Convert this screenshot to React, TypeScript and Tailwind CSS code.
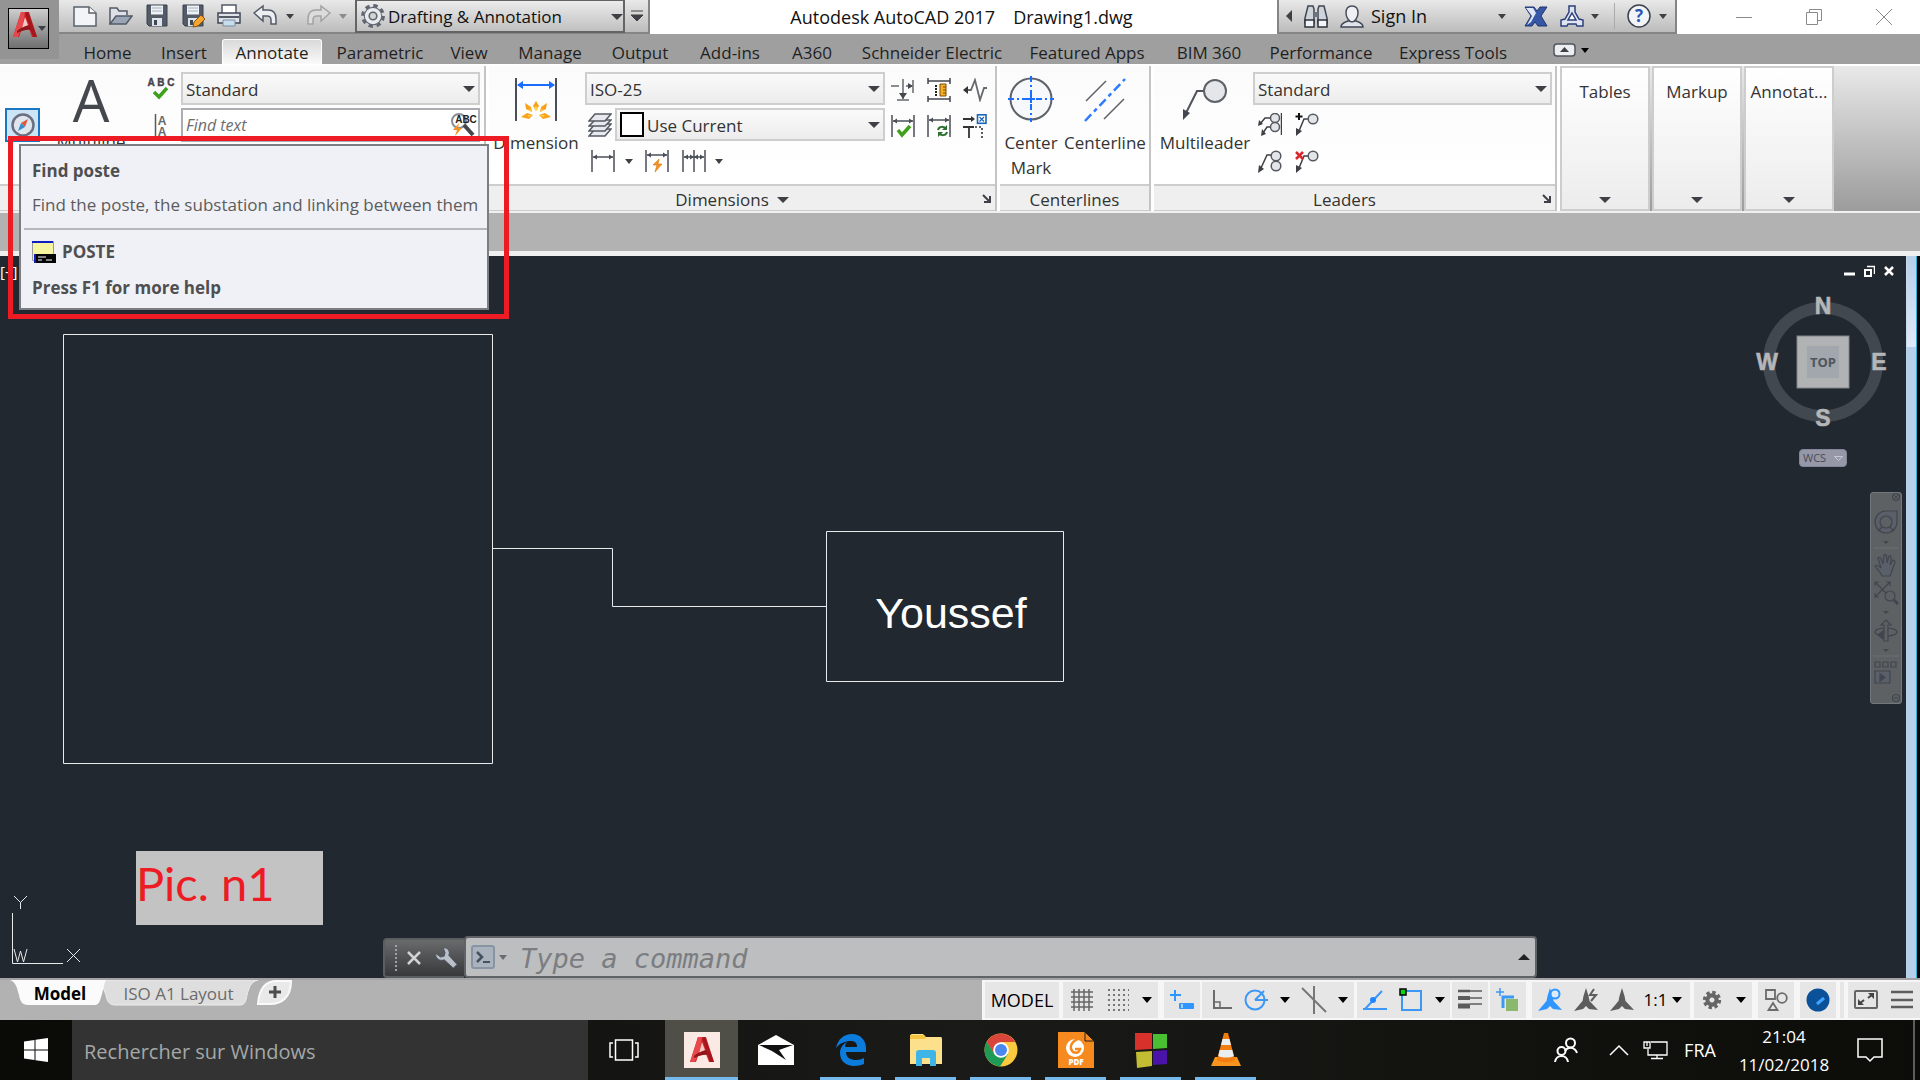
import React from "react";

type P = { children?: React.ReactNode; className?: string };

const Ic = ({ children, className = "", size = 24 }: P & { size?: number }) => (
  <svg width={size} height={size} viewBox="0 0 24 24" fill="none" className={`shrink-0 ${className}`} aria-hidden="true">
    {children}
  </svg>
);

const Caret = ({ className = "text-[#3f4045]", big = false }: { className?: string; big?: boolean }) => (
  <svg width={big ? 12 : 8} height={big ? 6 : 5} viewBox="0 0 12 6" preserveAspectRatio="none" className={`shrink-0 ${className}`} aria-hidden="true">
    <path d="M0 0h12L6 6z" fill="currentColor" />
  </svg>
);

const Btn = ({ children, className = "", label }: P & { label: string }) => (
  <button type="button" aria-label={label} className={`flex items-center justify-center shrink-0 ${className}`}>
    {children}
  </button>
);

/* ---------- title bar ---------- */

const AcadLogo = ({ className = "" }: { className?: string }) => (
  <svg viewBox="0 0 24 28" className={className} aria-hidden="true">
    <path d="M8 1h8l8 25h-5l-3-8-8 2-2 6H0z" fill="#c8242b" />
    <path d="M8 1h4l-2 12-5 13H0z" fill="#e8484b" />
    <path d="M12 6l3 8-6 3z" fill="#f3c9c4" />
    <path d="M4 20c6-5 10-5 14-6l2 5c-6-1-10 0-16 3z" fill="#93151b" />
    <path d="M15 1l9 25h-4L12 2z" fill="#a5161d" />
  </svg>
);

const FloppyShape = () => (
  <>
    <path d="M2 1h20v21H4l-2-2z" fill="#535b68" stroke="#3b424e" />
    <path d="M6 1.500h12v9H6z" fill="#eef1f5" />
    <path d="M7 4h10M7 7h10" stroke="#a8b0bb" />
    <path d="M7 14h10v8H7z" fill="#dfe4ea" />
    <path d="M9 16h3v5H9z" fill="#3f4754" />
  </>
);

const Help = () => (
  <Ic>
    <circle cx="12" cy="12" r="11" fill="#f2f4f8" stroke="#3b424e" strokeWidth="1.500" />
    <text x="12" y="18" textAnchor="middle" fontSize="17" fontWeight="700" fill="#2c55b5">?</text>
  </Ic>
);

const TitleBar = () => (
  <header className="flex h-[34px] items-start bg-white pl-[59px]">
    <div className="flex h-[34px] w-[591px] shrink-0 items-center border-r-2 border-b-2 border-[#858585] bg-gradient-to-b from-[#e9e9e9] to-[#bcbcbc] pl-[14px]">
      <div className="flex items-center gap-3">
        <Btn label="New"><Ic><path d="M1 3h15l7 6v13H1z" fill="#f3f4f7" stroke="#5a616c" strokeWidth="1.500" /><path d="M16 3v6h7" fill="#fff" stroke="#5a616c" strokeWidth="1.500" /></Ic></Btn>
        <Btn label="Open"><Ic><path d="M1 20V4h7l2 3h8v4" fill="#dde1e7" stroke="#535b68" strokeWidth="1.500" /><path d="M1 20l6-8h16l-6 8z" fill="#9aa6b5" stroke="#535b68" strokeWidth="1.500" /></Ic></Btn>
        <Btn label="Save"><Ic><FloppyShape /></Ic></Btn>
        <Btn label="Save As"><Ic><FloppyShape /><path d="M12 23l1-5 7-7 4 4-7 7z" fill="#f5a62c" stroke="#8a4f14" /></Ic></Btn>
        <Btn label="Plot"><Ic><path d="M5 1h14v9H5z" fill="#fff" stroke="#535b68" strokeWidth="1.500" /><path d="M1 9h22v10H1z" fill="#dfe2e7" stroke="#3f4754" strokeWidth="1.500" /><path d="M2 13h20" stroke="#535b68" strokeWidth="2" /><path d="M6 16h12v6H6z" fill="#c9ddec" stroke="#7690a5" /></Ic></Btn>
        <Btn label="Undo"><Ic><path d="M1 9l9-7v4h5c6 0 8 4 8 9v5h-5v-4c0-3-1-4-4-4h-4v5z" fill="#eceef1" stroke="#535b68" strokeWidth="1.500" /></Ic></Btn>
      </div>
      <Btn label="Undo list" className="w-[26px]"><Caret /></Btn>
      <Btn label="Redo" className="ml-1"><Ic><path d="M23 9l-9-7v4H9c-6 0-8 4-8 9v5h5v-4c0-3 1-4 4-4h4v5z" fill="#dcdcdc" stroke="#a3a3a3" strokeWidth="1.500" /></Ic></Btn>
      <Btn label="Redo list" className="w-6"><Caret className="text-[#8b8b8b]" /></Btn>
      <label className="relative flex h-[34px] w-[270px] items-center border-2 border-[#646464] bg-gradient-to-b from-[#ececec] to-[#c0c0c0] pl-[3px]">
        <Ic size={26}>
          <circle cx="12" cy="12" r="9.500" stroke="#5f6671" strokeWidth="3" strokeDasharray="4 3.460" />
          <circle cx="12" cy="12" r="8" fill="#e9ebee" stroke="#5f6671" />
          <circle cx="12" cy="12" r="3.500" fill="#d4d4d4" stroke="#5f6671" strokeWidth="1.500" />
        </Ic>
        <select aria-label="Workspace" className="h-full flex-1 appearance-none bg-transparent pt-px pl-[2px] text-[17px] text-[#111]">
          <option>Drafting &amp; Annotation</option>
        </select>
        <span className="pointer-events-none absolute right-0 top-[13px]"><Caret big /></span>
      </label>
      <Btn label="Customize Quick Access Toolbar" className="h-8 flex-1">
        <svg width="12" height="12" viewBox="0 0 12 12"><path d="M0 1h12M0 5h12L6 11z" fill="#3f4045" stroke="#3f4045" /></svg>
      </Btn>
    </div>
    <div className="flex h-[34px] flex-1 items-center justify-center gap-[18px] pr-1 whitespace-pre text-[18px] text-[#111]">
      <span>Autodesk AutoCAD 2017</span>
      <span>Drawing1.dwg</span>
    </div>
    <div className="flex h-[34px] w-[400px] shrink-0 items-center border-x-2 border-b-2 border-[#858585] bg-gradient-to-b from-[#e9e9e9] to-[#bcbcbc]">
      <Btn label="Collapse search" className="w-[20px]"><svg width="6" height="12"><path d="M6 0v12L0 6z" fill="#3f4045" /></svg></Btn>
      <Btn label="Search" className="mr-3 ml-[5px]"><Ic>
        <path d="M4 2h5l1 3v14H1v-5zM20 2h-5l-1 3v14h9v-5z" fill="#cfd3da" stroke="#3f4754" strokeWidth="1.500" />
        <path d="M1 16h9v7H1zM14 16h9v7h-9z" fill="#f4f5f8" stroke="#2c323c" strokeWidth="1.500" />
        <path d="M10 8h4v5h-4z" fill="#6c7480" /></Ic></Btn>
      <button type="button" className="flex items-center gap-[7px] pt-px text-[18px] text-[#111]">
        <Ic><path d="M1 22c0-4 4-5 7-6h8c3 1 7 2 7 6z" fill="#dfe2e8" stroke="#3f4754" strokeWidth="1.500" /><path d="M12 1c4 0 6 3 6 7s-3 9-6 9-6-5-6-9 2-7 6-7z" fill="#eef0f5" stroke="#4a515d" strokeWidth="1.500" /></Ic>
        Sign In
      </button>
      <Btn label="Sign in menu" className="ml-auto w-5"><Caret /></Btn>
      <Btn label="Exchange" className="ml-3"><Ic><path d="M1 3h9l3 4 3-4h7l-6 9 6 10h-9l-3-4-3 4H1l6-10z" fill="#3557a5" stroke="#24356c" /><path d="M2 4h7l3 5-5 9-4 3 5-9z" fill="#dfe6f5" /></Ic></Btn>
      <Btn label="A360" className="ml-3"><Ic><path d="M9 2h6v6l4 7 4 1v6h-6l-1-2H8l-1 2H1v-6l4-1 4-7z" fill="#dfe4f0" stroke="#2b3f7c" strokeWidth="1.500" /><path d="M12 9l4 7H8z" fill="#fff" stroke="#2b3f7c" strokeWidth="1.500" /></Ic></Btn>
      <Btn label="A360 menu" className="w-[22px]"><Caret /></Btn>
      <span className="mr-3 ml-2 h-[26px] w-px bg-[#aaa]" />
      <Btn label="Help"><Help /></Btn>
      <Btn label="Help menu" className="w-[24px]"><Caret /></Btn>
    </div>
    <div className="flex h-[34px] w-[243px] shrink-0 items-center justify-end gap-[54px] pr-7">
      <Btn label="Minimize"><svg width="16" height="16"><path d="M0 8.500h16" stroke="#8a8a8a" /></svg></Btn>
      <Btn label="Restore"><svg width="16" height="16" fill="none" stroke="#8a8a8a"><path d="M.5 3.500h11v12H.5zM3.500 3V.5h12v11H12" /></svg></Btn>
      <Btn label="Close"><svg width="16" height="16"><path d="M0 0l16 16M16 0L0 16" stroke="#8a8a8a" /></svg></Btn>
    </div>
  </header>
);

/* ---------- ribbon tabs ---------- */

const tabs: [string, string][] = [
  ["Home", "w-[77px]"], ["Insert", "w-[76px]"], ["Annotate", "w-[100px]"], ["Parametric", "w-[116px]"],
  ["View", "w-[62px]"], ["Manage", "w-[100px]"], ["Output", "w-[80px]"], ["Add-ins", "w-[100px]"],
  ["A360", "w-[64px]"], ["Schneider Electric", "w-[176px]"], ["Featured Apps", "w-[134px]"],
  ["BIM 360", "w-[110px]"], ["Performance", "w-[114px]"], ["Express Tools", "w-[150px]"],
];

const Tabs = () => (
  <nav className="flex h-[30px] items-end bg-[#9f9f9f] pl-[69px]" role="tablist">
    {tabs.map(([name, w]) => (
      <button
        key={name}
        type="button"
        role="tab"
        aria-selected={name === "Annotate"}
        className={`h-[25px] shrink-0 border border-b-0 text-[17px] leading-[26px] whitespace-nowrap text-[#1f1f1f] ${w} ${
          name === "Annotate" ? "rounded-t-[3px] border-white bg-gradient-to-b from-[#d9d9d9] to-[#fafafa]" : "border-transparent"
        }`}
      >
        {name}
      </button>
    ))}
    <div className="ml-[25px] flex h-[28px] items-center gap-[5px]">
      <Btn label="Minimize ribbon">
        <svg width="23" height="14"><rect x="1" y="1" width="21" height="12" rx="3" fill="#eceef2" stroke="#50555f" strokeWidth="1.500" /><path d="M7 9h9l-4.500-5z" fill="#3f4045" /></svg>
      </Btn>
      <Btn label="Ribbon options"><Caret className="text-black" /></Btn>
    </div>
  </nav>
);

/* ---------- ribbon ---------- */

const Panel = ({ children, className = "", title, launcher, caret }: P & { title?: string; launcher?: boolean; caret?: boolean }) => (
  <section className={`mr-[3px] flex shrink-0 flex-col border-r-2 border-[#c4c4c4] ${className}`}>
    <div className="flex h-[118px] bg-gradient-to-b from-[#fbfbfb] to-white">{children}</div>
    <div className={`relative flex h-[27px] items-center justify-center gap-2 border-t-2 border-b border-[#cdcdcd] bg-[#efefef] pt-[3px] text-[17px] ${launcher ? "pr-5" : ""}`}>
      {title}
      {caret && <Caret big />}
      {launcher && (
        <button type="button" aria-label={`${title} settings`} className="absolute right-[4px] bottom-[7px]">
          <svg width="9" height="9" fill="none" stroke="#3f4045" strokeWidth="2"><path d="M1 1l6 6M8 2v6H2" /></svg>
        </button>
      )}
    </div>
  </section>
);

const Combo = ({ value, label, className = "", children }: P & { value: string; label: string }) => (
  <div className={`relative flex h-[33px] items-center border-2 border-[#cecece] bg-gradient-to-b from-[#fafafa] to-[#ececec] ${className}`}>
    {children}
    <select aria-label={label} className="h-full min-w-0 flex-1 appearance-none bg-transparent pt-[3px] pl-[3px] text-[17px] text-[#333]">
      <option>{value}</option>
    </select>
    <span className="pointer-events-none absolute top-[12px] right-[3px]"><Caret big /></span>
  </div>
);

const DimBase = ({ blue = false, y = 6 }: { blue?: boolean; y?: number }) => (
  <>
    <path d="M1 1v22M23 1v22" stroke="#4a4e56" strokeWidth="1.500" />
    <path d={`M2 ${y}h20`} stroke={blue ? "#1a6dff" : "#4a4e56"} strokeWidth="1.500" />
    <path d={`M2 ${y}l4-2.500v5zM22 ${y}l-4-2.500v5z`} fill={blue ? "#1a6dff" : "#4a4e56"} />
  </>
);

const Bolt = () => <path d="M14 10l-6 6h4l-2 7 7-8h-4z" fill="#f79421" stroke="#d9730d" strokeWidth=".6" />;

const SmallLeader = ({ kind }: { kind: "align" | "add" | "collect" | "remove" }) => (
  <Ic>
    {kind === "align" && <><path d="M23.500 0v22" stroke="#3f4045" strokeWidth="1.500" /><path d="M13 5H7l-5 6M13 14H9l-4 6" stroke="#3f4045" strokeWidth="1.500" /><path d="M0 13l1-6 4 4zM3 23l1-7 4 5z" fill="#3f4045" /><circle cx="17" cy="5" r="4.500" fill="#e3e5e8" stroke="#555a62" strokeWidth="1.500" /><circle cx="17" cy="14" r="4.500" fill="#e3e5e8" stroke="#555a62" strokeWidth="1.500" /></>}
    {kind === "collect" && <><path d="M14 5H9L3 18" stroke="#3f4045" strokeWidth="1.500" /><path d="M0 23l1-8 5 4z" fill="#3f4045" /><circle cx="18" cy="6" r="4.800" fill="#e3e5e8" stroke="#555a62" strokeWidth="1.500" /><circle cx="18" cy="16" r="4.800" fill="#e3e5e8" stroke="#555a62" strokeWidth="1.500" /></>}
    {(kind === "add" || kind === "remove") && <><path d="M13 6H9L4 18" stroke="#3f4045" strokeWidth="1.500" /><path d="M1 23l0-8 6 3z" fill="#3f4045" /><circle cx="18" cy="6" r="4.800" fill="#e3e5e8" stroke="#555a62" strokeWidth="1.500" /></>}
    {kind === "add" && <path d="M4 0v7M.5 3.500h7" stroke="#111" strokeWidth="2" />}
    {kind === "remove" && <path d="M1 2l7 7M8 2L1 9" stroke="#d8262c" strokeWidth="2.500" />}
  </Ic>
);

const TextPanel = () => (
  <Panel className="w-[486px]">
    <Btn label="Find poste" className="mt-[42px] ml-[5px] h-[34px] w-[35px] border-2 border-[#1b76c4] bg-[#cbe5f6]">
      <Ic>
        <circle cx="12" cy="12" r="10.500" fill="#dfe6ee" stroke="#6b6f80" strokeWidth="2.500" />
        <path d="M17 6l-3 8-4-4z" fill="#e0583c" /><path d="M7 18l3-8 4 4z" fill="#2f8fd0" />
      </Ic>
    </Btn>
    <button type="button" className="ml-[14px] flex w-[74px] flex-col items-center text-[17px]">
      <span aria-hidden="true" className="h-[62px] text-[58px] leading-[68px] font-medium text-[#44474d]">A</span>
      <span className="leading-[28px]">Multiline</span>
    </button>
    <div className="mt-[10px] ml-[19px] flex flex-col items-center gap-[12px]">
      <Btn label="Spell check"><svg width="28" height="26"><text x="14" y="10" textAnchor="middle" fontSize="10" fontWeight="800" fontFamily="Liberation Sans" fill="#44474d" stroke="#44474d" strokeWidth=".4">A B C</text><path d="M7 16l5 5 8-9" stroke="#3fa01c" strokeWidth="3.500" fill="none" /></svg></Btn>
      <Btn label="Text align"><svg width="14" height="24"><path d="M1.500 0v24" stroke="#55585e" strokeWidth="1.500" /><text x="8" y="11" textAnchor="middle" fontSize="12" fontFamily="Liberation Sans" fontWeight="700" fill="#66696e">A</text><text x="8" y="22" textAnchor="middle" fontSize="12" fontFamily="Liberation Sans" fontWeight="700" fill="#66696e">A</text></svg></Btn>
    </div>
    <div className="mt-[6px] ml-[6px] flex w-[299px] flex-col gap-[3px]">
      <Combo value="Standard" label="Text style" />
      <div className="flex h-[34px] items-center border-2 border-[#abadb3] bg-white">
        <input aria-label="Find text" placeholder="Find text" className="h-full min-w-0 flex-1 bg-transparent pl-[3px] text-[16px] italic placeholder:text-[#6d6d6d]" />
        <Btn label="Find">
          <svg width="28" height="26" fill="none"><circle cx="9" cy="9" r="7" stroke="#8a8f96" strokeWidth="2" /><path d="M14 13l9 10" stroke="#44474d" strokeWidth="4" /><path d="M9 11l-6 7h4l-2 6 7-8H8z" fill="#f79421" /><text x="16" y="11" textAnchor="middle" fontSize="10" fontWeight="700" fontFamily="Liberation Sans" fill="#222">ABC</text></svg>
        </Btn>
      </div>
    </div>
  </Panel>
);

const DimensionsPanel = () => (
  <Panel title="Dimensions" launcher caret className="w-[508px]">
    <button type="button" className="ml-[3px] flex w-[88px] flex-col items-center text-[17px]">
      <svg width="44" height="46" className="mt-[11px]" fill="none" aria-hidden="true">
        <path d="M2 1v43M42 1v43" stroke="#4a4e56" strokeWidth="2" /><path d="M4 8h36" stroke="#1a6dff" strokeWidth="2" /><path d="M3 8l6-4v8zM41 8l-6-4v8z" fill="#1a6dff" />
        <g fill="#f9a11b"><path d="M22 24l3 5-3 5-3-5zM11 26l6 4 1 5-6-3zM33 26l-6 4-1 5 6-3zM7 40l6-4 6 2-4 4zM37 40l-6-4-6 2 4 4z" /></g>
        <g fill="#ffd53d"><path d="M22 29l2 2-2 3-2-3zM14 31l3 2v2zM30 31l-3 2v2zM13 38l5 0-3 2zM31 38l-5 0 3 2z" /></g>
      </svg>
      <span className="mt-[8px] leading-6">Dimension</span>
    </button>
    <div className="mt-[6px] ml-[5px] flex w-[300px] flex-col gap-[3px]">
      <Combo value="ISO-25" label="Dimension style" />
      <div className="flex items-center gap-[3px]">
        <Ic className="ml-[3px]"><g fill="#e6e9ed" stroke="#555a62" strokeWidth="1.500"><path d="M1 23l6-7h16l-6 7z" /><path d="M1 18l6-7h16l-6 7z" /><path d="M1 13l6-6h16l-6 6z" /><path d="M1 8l6-7h16l-6 7z" /></g></Ic>
        <Combo value="Use Current" label="Dimension layer" className="w-[270px]">
          <span className="ml-[3px] h-[25px] w-[24px] shrink-0 border-2 border-black bg-white" />
        </Combo>
      </div>
      <div className="mt-[5px] flex h-6 items-center pl-[6px]">
        <Btn label="Linear"><Ic><DimBase y={8} /></Ic></Btn>
        <Btn label="Linear list" className="w-[28px]"><Caret /></Btn>
        <Btn label="Quick dimension" className="ml-[2px]"><Ic><DimBase /><Bolt /></Ic></Btn>
        <Btn label="Continue" className="ml-[13px]"><Ic><DimBase y={8} /><path d="M12 1v22" stroke="#4a4e56" strokeWidth="1.500" /><path d="M12 8l-4-2.500v5zM12 8l4-2.500v5z" fill="#4a4e56" /></Ic></Btn>
        <Btn label="Continue list" className="w-[26px]"><Caret /></Btn>
      </div>
    </div>
    <div className="mt-3 ml-[6px] grid h-[60px] grid-cols-[24px_24px_24px] gap-3">
      <Btn label="Break"><Ic><path d="M0 8h8M12 1v20M6 22h12M15 8h6M22 2v13" stroke="#66696e" strokeWidth="1.500" /><path d="M12 21l-4-6h8zM22 8l-5-3v6z" fill="#44474d" /></Ic></Btn>
      <Btn label="Adjust space"><Ic><path d="M1 0v6M23 0v6M1 3h22M1 18v6M23 18v6M1 21h22" stroke="#44474d" strokeWidth="1.500" /><path d="M9 7v11" stroke="#222" strokeWidth="2" strokeDasharray="2 1" /><path d="M13 6h6v12h-6z" fill="#f5b11e" stroke="#7a4c12" /><path d="M16 9h3M16 12h3M16 15h3" stroke="#7a4c12" /></Ic></Btn>
      <Btn label="Jog line"><Ic><path d="M2 12h6l4-10 5 20 4-12h3" stroke="#66696e" strokeWidth="1.800" /><path d="M0 12l5-4v8z" fill="#333" /></Ic></Btn>
      <Btn label="Inspect"><Ic><DimBase y={7} /><path d="M7 16l4 5 8-9" stroke="#3fa01c" strokeWidth="3.500" /></Ic></Btn>
      <Btn label="Update"><Ic><DimBase y={6} /><path d="M11 16c1-4 6-4 8-1M20 18c-1 4-6 4-8 1" stroke="#2c6e2f" strokeWidth="2" /><path d="M20 11v5h-5zM11 23v-5h5z" fill="#2c6e2f" /></Ic></Btn>
      <Btn label="Reassociate"><Ic><path d="M0 5h8M6 24V13M0 13h11" stroke="#333" strokeWidth="1.800" /><path d="M8 2v6l4-3z" fill="#333" /><rect x="14.500" y=".8" width="8.500" height="8.500" fill="#fff" stroke="#1b66b8" strokeWidth="1.600" /><path d="M16.500 3l4.500 4.500M21 3l-4.500 4.500" stroke="#1b66b8" strokeWidth="1.200" /><path d="M12 13h7v11" stroke="#333" strokeWidth="1.600" strokeDasharray="2 2" /></Ic></Btn>
    </div>
  </Panel>
);

const CenterlinesPanel = () => (
  <Panel title="Centerlines" className="w-[151px]">
    <button type="button" className="ml-[2px] flex w-[58px] flex-col items-center text-[17px]">
      <svg width="48" height="48" className="mt-[9px]" fill="none" aria-hidden="true">
        <circle cx="24" cy="24" r="20.500" fill="#f7f8fa" stroke="#5d6168" strokeWidth="2" />
        <path d="M1 24h46M24 1v46" stroke="#1a6dff" strokeWidth="2" strokeDasharray="6 3 2 3" /><path d="M20 24h8M24 20v8" stroke="#1a6dff" strokeWidth="2" />
      </svg>
      <span className="mt-[7px] leading-[25px]">Center<br />Mark</span>
    </button>
    <button type="button" className="ml-[4px] flex w-[82px] flex-col items-center text-[17px]">
      <svg width="44" height="48" className="mt-[9px]" fill="none" aria-hidden="true">
        <path d="M3 26L23 6M21 44l20-20" stroke="#5d6168" strokeWidth="1.500" /><path d="M2 46L42 4" stroke="#2f7bff" strokeWidth="2.500" strokeDasharray="9 4 4 4" />
      </svg>
      <span className="mt-[7px] leading-[25px]">Centerline</span>
    </button>
  </Panel>
);

const LeadersPanel = () => (
  <Panel title="Leaders" launcher className="w-[403px]">
    <button type="button" className="ml-[5px] flex w-[92px] flex-col items-center text-[17px]">
      <svg width="46" height="48" className="mt-[9px]" fill="none" aria-hidden="true">
        <path d="M24 16H15L4 38" stroke="#4f535a" strokeWidth="2" /><path d="M1 45V34l7 4z" fill="#44474d" /><circle cx="33" cy="16" r="11" fill="#e4e6e9" stroke="#5d6168" strokeWidth="2" />
      </svg>
      <span className="mt-[7px] leading-[25px]">Multileader</span>
    </button>
    <div className="mt-[6px] ml-[2px] flex w-[299px] flex-col">
      <Combo value="Standard" label="Multileader style" />
      <div className="mt-[8px] ml-[5px] grid w-[61px] grid-cols-2 gap-x-[13px] gap-y-[13px]">
        <Btn label="Align"><SmallLeader kind="align" /></Btn>
        <Btn label="Add leader"><SmallLeader kind="add" /></Btn>
        <Btn label="Collect"><SmallLeader kind="collect" /></Btn>
        <Btn label="Remove leader"><SmallLeader kind="remove" /></Btn>
      </div>
    </div>
  </Panel>
);

const Ribbon = () => (
  <>
    <div className="flex h-[147px] items-start border-t-2 border-white bg-gradient-to-b from-[#e9e9e9] to-[#9c9c9c] text-[#333]">
      <div className="flex shrink-0 bg-white">
        <TextPanel />
        <DimensionsPanel />
        <CenterlinesPanel />
        <LeadersPanel />
      </div>
      {["Tables", "Markup", "Annotat..."].map((t) => (
        <button key={t} type="button" className="mr-[2px] flex h-[145px] w-[90px] shrink-0 flex-col items-center justify-between border-2 border-[#cdcdcd] bg-gradient-to-b from-white to-[#ececec] pt-[11px] pb-[6px] text-[17px]">
          {t}
          <Caret big />
        </button>
      ))}
    </div>
    <div className="h-[45px] border-t-2 border-b-5 border-t-[#f0f0f0] border-b-[#efefef] bg-[#b2b2b2]" />
  </>
);

/* ---------- drawing area ---------- */

const ViewCube = () => (
  <div className="absolute top-[36px] right-[15px] flex w-[136px] flex-col items-center">
    <svg width="136" height="140" fill="none" aria-label="View cube" fontFamily="Liberation Sans" fontWeight="700" fontSize="23" textAnchor="middle">
      <circle cx="68" cy="70" r="54" stroke="#41484f" strokeWidth="12" />
      <rect x="42" y="44" width="52" height="52" fill="#b1b2b4" stroke="#808488" />
      <rect x="52" y="54" width="32" height="32" fill="#a1a7ac" />
      <text x="68" y="75" fontSize="13" fontFamily="Open Sans" fill="#4f555c">TOP</text>
      <g fill="#b4b6b8" stroke="#b4b6b8" strokeWidth=".6">
        <text x="68" y="22">N</text><text x="68" y="134">S</text><text x="12" y="78">W</text><text x="124" y="78">E</text>
      </g>
    </svg>
    <button type="button" className="mt-[17px] flex h-[18px] w-[48px] items-center justify-between rounded-[4px] border border-[#83869a] bg-[#9698a8] px-[3px] text-[11px] text-[#474a55]">
      WCS
      <svg width="9" height="5" fill="none" stroke="#c5c8d4"><path d="M.5.5h8l-4 4z" /></svg>
    </button>
  </div>
);

const NavBar = () => (
  <div className="absolute top-[236px] right-[4px] h-[212px] w-[32px] rounded-[3px] border border-[#73787c] bg-[#5d6164]">
    <svg width="30" height="210" viewBox="1 1 30 210" fill="none" stroke="#40464e" strokeWidth="1.200" aria-label="Navigation bar">
      <circle cx="26" cy="5" r="3.500" /><path d="M24 3l4 4M28 3l-4 4" strokeWidth="1" />
      <path d="M16 19h11v11a11 11 0 1 1-11-11z" fill="#5a5f69" /><circle cx="16" cy="30" r="6" fill="#5d6164" /><path d="M12 35l-4 4M20 35l4 4" />
      <path d="M13 49h6l-3 3z" fill="#40464e" stroke="none" /><path d="M3 56h26" stroke="#6b7075" strokeWidth="1" />
      <path d="M12 84c-2-5-5-7-7-10 2-2 4 0 6 2L8 66c2-2 3 0 5 6l1-9c2-2 3 0 3 8l2-7c2-1 3 1 1 9l3-5c3 0 2 3 0 8l-3 8z" fill="#5a5f69" />
      <path d="M5 90l15 15M20 90L5 105M5 94v-4h4M16 90h4v4M5 101v4h4" /><circle cx="20" cy="104" r="5" fill="#5d6164" /><path d="M24 108l4 4" strokeWidth="3" />
      <path d="M13 119h6l-3 3z" fill="#40464e" stroke="none" />
      <ellipse cx="16" cy="140" rx="11" ry="4" /><path d="M14 149v-16h-3l5-5 5 5h-3v16z" fill="#5d6164" /><path d="M8 143l5-4v8z" fill="#40464e" />
      <path d="M13 157h6l-3 3z" fill="#40464e" stroke="none" /><path d="M3 164h26" stroke="#6b7075" strokeWidth="1" />
      <path d="M5 170h5v5H5zM13 170h5v5h-5zM21 170h5v5h-5z" /><path d="M5 179h15v12H5z" fill="#5a5f69" /><path d="M10 182v7l5-3.500z" fill="#40464e" />
      <circle cx="26" cy="206" r="3.500" /><path d="M24 206h4" />
    </svg>
  </div>
);

const CommandLine = () => (
  <div className="absolute right-[369px] bottom-0 left-[383px] flex items-end">
    <div className="flex h-10 w-[81px] shrink-0 items-center rounded-l-[4px] border-2 border-r-0 border-[#5b5e61] bg-gradient-to-b from-[#6a6b6d] to-[#38393a] pl-[10px]">
      <span className="h-[26px] border-l-2 border-dotted border-[#a0a3a6]" />
      <Btn label="Close command line" className="ml-[9px]"><svg width="16" height="14"><path d="M2 1l12 12M14 1L2 13" stroke="#d0d2d4" strokeWidth="2.500" /></svg></Btn>
      <Btn label="Customize" className="ml-[13px]"><Ic size={22}><path d="M9 1c5-1 8 4 6 8l9 10-4 4L10 14C5 16 0 12 1 7l5 4 4-1 1-4z" fill="#b9c0c9" stroke="#4b5460" /></Ic></Btn>
    </div>
    <div className="flex h-[42px] flex-1 items-center rounded-[4px] border-2 border-[#606366] bg-[#bcbec0] pl-[5px]">
      <Btn label="Recent commands"><svg width="24" height="24" fill="none"><rect x="1" y="1" width="22" height="22" rx="2" fill="#a9b2bd" stroke="#8794a3" strokeWidth="2" /><path d="M6 7l5 5-5 5" stroke="#44515f" strokeWidth="2.500" /><path d="M12 17h7" stroke="#44515f" strokeWidth="2" /></svg></Btn>
      <Btn label="Recent commands list" className="w-4"><Caret className="text-[#6a6d70]" /></Btn>
      <input aria-label="Command" placeholder="Type a command" className="h-full min-w-0 flex-1 bg-transparent pt-[2px] pl-[9px] font-['DejaVu_Sans_Mono',monospace] text-[27px] italic placeholder:text-[#7b7d80]" />
      <Btn label="Command history" className="mr-[5px]"><svg width="12" height="6"><path d="M0 6h12L6 0z" fill="#222" /></svg></Btn>
    </div>
  </div>
);

const Canvas = () => (
  <main className="flex h-[722px]">
    <div className="relative min-w-0 flex-1 overflow-hidden bg-[#212830]">
      <svg className="absolute inset-0 h-full w-full" fill="none" stroke="#e8e9ea" aria-label="Drawing">
        <path d="M63.500 78.500h429v429h-429zM826.500 275.500h237v150h-237zM492.500 292.500h120v58h214" />
        <text x="951" y="372" textAnchor="middle" fontSize="43" fontFamily="Liberation Sans" fill="#fff" stroke="none">Youssef</text>
        <path d="M12.500 657v50.500H63M14 640l6.500 6.500L27 640M20.500 646.500V653M67 693l13 13M80 693l-13 13M14 693l3.500 13 3-11 3 11 3.500-13" />
      </svg>
      <span className="absolute top-[4px] left-0 text-[15px] text-white">[–]</span>
      <div className="absolute top-[9px] right-[12px] flex h-3 items-center gap-[9px]">
        <Btn label="Minimize drawing"><svg width="11" height="12"><path d="M0 9h11" stroke="#fff" strokeWidth="3" /></svg></Btn>
        <Btn label="Restore drawing"><svg width="11" height="12" fill="none" stroke="#fff"><path d="M1 5h6v6H1z" strokeWidth="2" /><path d="M3 1.500h7.500V9" strokeWidth="1.500" /></svg></Btn>
        <Btn label="Close drawing"><svg width="10" height="10"><path d="M1 1l8 8M9 1L1 9" stroke="#fff" strokeWidth="2.500" /></svg></Btn>
      </div>
      <ViewCube />
      <NavBar />
      <div className="absolute top-[595px] left-[136px] h-[74px] w-[187px] bg-[#c3c3c3] font-['Lato',sans-serif] text-[47px] leading-[65px] text-[#ed1c24]">Pic. n1</div>
      <CommandLine />
    </div>
    <div className="flex w-[14px] shrink-0 flex-col border-r-3 border-black bg-[#b8cfe9]">
      <div className="flex flex-1 flex-col border-r border-[#28b4d8]">
        <div className="h-[91px] border-l border-[#c8daf0] bg-gradient-to-b from-[#b8cfe9] to-[#dfe9f7]" />
      </div>
    </div>
  </main>
);

/* ---------- layout tabs and status bar ---------- */

const Cell = ({ children, className = "" }: P) => (
  <div className={`flex h-9 shrink-0 items-center bg-[#e6e6e6] ${className}`}>{children}</div>
);
const S = ({ children, label, w = "w-9" }: P & { label: string; w?: string }) => (
  <Btn label={label} className={`h-9 ${w}`}>{children}</Btn>
);
const StatusCaret = ({ label, w = "w-[22px]" }: { label: string; w?: string }) => (
  <S label={label} w={w}><svg width="10" height="6"><path d="M0 0h10L5 6z" fill="#000" /></svg></S>
);
const Person = ({ color, extra }: { color: string; extra?: React.ReactNode }) => (
  <Ic>
    <path d="M12 0l2.500 8 1 5 8.500 9-9-1-3-3-3 3-9 2 8.500-10 1-5z" fill={color} />
    {extra}
  </Ic>
);

const StatusBar = () => (
  <div className="flex h-[42px] items-start border-t-2 border-[#a3a3a3] bg-[#b2b2b2]">
    <div className="relative" role="tablist">
      <svg width="294" height="26" className="block" aria-hidden="true">
        <path d="M100 0h158c-8 2-9 8-11 15-1 6-2 10-7 10H115c-6 0-8-4-9-10z" fill="#dedede" stroke="#ededed" />
        <path d="M10 0h96c-2 4-3 10-4 14-2 7-3 11-7 11H28c-6 0-8-4-9-10-2-7-3-13-9-15z" fill="#fbfbfb" />
        <path d="M291 1h-14c-12 0-18 8-19 23h12c12 0 21-7 21-23z" fill="#e9e9e9" stroke="#fafafa" strokeWidth="2" />
        <path d="M275 6v12M269 12h12" stroke="#4d4d4d" strokeWidth="3" />
      </svg>
      <div className="absolute inset-0 flex text-[17px] leading-[28px]">
        <button type="button" role="tab" aria-selected="true" className="ml-[15px] w-[90px] font-bold text-black">Model</button>
        <button type="button" role="tab" aria-selected="false" className="w-[147px] text-[#6b6b6b]">ISO A1 Layout</button>
        <button type="button" aria-label="New layout" className="w-[40px]" />
      </div>
    </div>
    <div className="ml-auto flex h-10 items-center bg-[#f6f6f6] pl-[3px]">
      <Cell className="mr-1 w-[74px] justify-center text-[18px] text-black"><button type="button">MODEL</button></Cell>
      <Cell className="mr-[6px]">
        <S label="Grid" w="w-[37px]"><Ic><path d="M4 1v22M9 1v22M14 1v22M19 1v22M1 4h22M1 9h22M1 14h22M1 19h22" stroke="#666" strokeWidth="1.500" /></Ic></S>
        <S label="Snap" w="w-[35px]"><Ic><path d="M2 2h21M2 7h21M2 12h21M2 17h21M2 22h21" stroke="#777" strokeWidth="2" strokeDasharray="2 3" /></Ic></S>
        <StatusCaret label="Snap list" w="w-[23px]" />
      </Cell>
      <Cell className="mr-[2px]"><S label="Dynamic input"><Ic><path d="M5 2v11M0 7h11" stroke="#2f95ff" strokeWidth="2" /><rect x="9" y="15" width="15" height="6" rx="1" fill="#2f95ff" /><path d="M12 16v4" stroke="#cfe5ff" strokeWidth="1.500" /></Ic></S></Cell>
      <Cell className="mr-[3px]">
        <S label="Ortho"><Ic><path d="M6 2v18h18" stroke="#6b6b6b" strokeWidth="2" /><path d="M6 14h6v6" stroke="#6b6b6b" strokeWidth="1.500" /></Ic></S>
        <S label="Polar"><Ic><circle cx="11" cy="12" r="9.500" stroke="#3d97f5" strokeWidth="2" /><path d="M11 12h13M11 12l9-9" stroke="#3d97f5" strokeWidth="2" /></Ic></S>
        <StatusCaret label="Polar list" />
        <S label="Isometric"><svg width="26" height="30" fill="none"><path d="M13 1v28M1 3l24 24" stroke="#777" strokeWidth="2" /></svg></S>
        <StatusCaret label="Isometric list" />
      </Cell>
      <Cell className="mr-[2px]">
        <S label="Object snap tracking"><Ic><path d="M0 21h24M2 21L19 3" stroke="#3d97f5" strokeWidth="2" /><circle cx="10" cy="12" r="3" fill="#1f86ff" /></Ic></S>
        <S label="Object snap"><Ic><path d="M3 3h19v19H3z" stroke="#3d97f5" strokeWidth="2" /><rect x="1" y="1" width="6" height="6" fill="#12d312" stroke="#000" strokeWidth="1.500" /></Ic></S>
        <StatusCaret label="Object snap list" w="w-[21px]" />
      </Cell>
      <Cell className="mr-[2px]"><S label="Lineweight"><Ic><path d="M0 3h24M12 10h12M12 16h12" stroke="#5d5d5d" strokeWidth="1.500" /><path d="M0 3h12" stroke="#5d5d5d" strokeWidth="2.500" /><path d="M0 10h12" stroke="#5d5d5d" strokeWidth="4" /><path d="M0 18h12" stroke="#5d5d5d" strokeWidth="5" /></Ic></S></Cell>
      <Cell className="mr-[6px]"><S label="Selection cycling"><Ic><path d="M4 0v8M0 4h8" stroke="#3d97f5" strokeWidth="1.500" /><path d="M7 20V9h11" stroke="#3d97f5" strokeWidth="3" /><rect x="10" y="11" width="12" height="12" fill="#8bb86c" /></Ic></S></Cell>
      <Cell className="mr-1">
        <S label="Annotation visibility"><Person color="#2f95ff" extra={<circle cx="17" cy="6" r="4.500" stroke="#2f95ff" strokeWidth="2" fill="#dcebfa" />} /></S>
        <S label="Auto scale"><Person color="#5d5d5d" extra={<path d="M20 1l-4 6h6l-5 6" stroke="#5d5d5d" strokeWidth="2" />} /></S>
        <S label="Annotation"><Person color="#5d5d5d" /></S>
        <button type="button" className="flex h-9 w-[50px] items-center justify-center gap-[5px] pr-1 text-[17px] text-black">
          1:1
          <svg width="10" height="6"><path d="M0 0h10L5 6z" fill="#000" /></svg>
        </button>
      </Cell>
      <Cell className="mr-[6px]">
        <S label="Workspace switching"><Ic size={20}><path d="M12 4a8 8 0 1 0 .1 0zM12 9a3 3 0 1 1-.1 0z" fill="#666" fillRule="evenodd" /><circle cx="12" cy="12" r="9" stroke="#666" strokeWidth="4" strokeDasharray="4 3.070" /></Ic></S>
        <StatusCaret label="Workspace list" />
      </Cell>
      <Cell className="mr-[6px]"><S label="Isolate objects"><Ic><path d="M2 2h9v9H2zM9 15l4.500 7h-9z" stroke="#6b6b6b" strokeWidth="1.800" /><circle cx="18" cy="10" r="4.800" stroke="#6b6b6b" strokeWidth="1.800" /></Ic></S></Cell>
      <Cell className="mr-1"><S label="Graphics performance"><Ic><circle cx="12" cy="12" r="11.500" fill="#0a5199" /><path d="M11 16l7-6" stroke="#3fa3ff" strokeWidth="3" /></Ic></S></Cell>
      <Cell className="mr-1 w-1" />
      <Cell>
        <S label="Clean screen"><Ic><rect x="1" y="3" width="22" height="17" rx="1" stroke="#666" strokeWidth="2" /><path d="M5 16l5-4M14 10l5-4" stroke="#444" strokeWidth="2" /><path d="M4 17v-6l6 6zM20 5v6l-6-6z" fill="#444" /></Ic></S>
        <S label="Customization"><Ic><path d="M1 4h22M1 12h22M1 19h22" stroke="#5d5d5d" strokeWidth="2.500" /></Ic></S>
      </Cell>
    </div>
  </div>
);

/* ---------- taskbar ---------- */

const TaskApp = ({ children, label, running = true }: P & { label: string; running?: boolean }) => (
  <button type="button" aria-label={label} className={`mx-[7px] flex h-[60px] w-[61px] shrink-0 items-center justify-center border-b-3 pt-[3px] ${running ? "border-[#76b9ed]" : "border-transparent"}`}>
    {children}
  </button>
);

const Taskbar = () => (
  <footer className="flex h-[60px] items-center bg-gradient-to-r from-[#0a0a07] via-[#1a1a18] to-[#0c0d08] text-white">
    <Btn label="Start" className="h-[60px] w-[72px]">
      <svg width="24" height="24"><path d="M0 3.400L10.500 2v9.500H0zM11.500 1.800L24 0v11.500H11.500zM0 12.500h10.500V22L0 20.600zM11.500 12.500H24V24l-12.500-1.800z" fill="#fff" /></svg>
    </Btn>
    <input aria-label="Rechercher sur Windows" placeholder="Rechercher sur Windows" className="h-[60px] w-[516px] shrink-0 bg-[#333] pt-[2px] pl-[12px] text-[20px] placeholder:text-[#a4a8a8]" />
    <Btn label="Task view" className="h-[60px] w-[77px] pr-[5px]">
      <svg width="30" height="24" fill="none" stroke="#fff" strokeWidth="1.500"><path d="M6.500 2h17v20h-17zM4 5H1v14h3M26 5h3v14h-3" /></svg>
    </Btn>
    <button type="button" aria-label="AutoCAD" className="flex h-[60px] w-[73px] shrink-0 items-center justify-center border-b-3 border-[#76b9ed] bg-[#4f4f48] pt-[3px]">
      <span className="flex h-9 w-9 items-center justify-center bg-[#fbe9e4]"><AcadLogo className="h-[28px] w-[24px]" /></span>
    </button>
    <TaskApp label="Mail" running={false}>
      <svg width="36" height="30"><path d="M0 10L18 0l18 10v20H0z" fill="#fff" /><path d="M1 10h34L21 15l7 10-14-9z" fill="#111" /></svg>
    </TaskApp>
    <TaskApp label="Edge">
      <svg width="30" height="32" viewBox="0 0 30 32"><path d="M0 14C2 5 8 0 16 0c9 0 14 7 14 14v4H10c0 6 5 8 10 8 3 0 6-1 8-2v6c-3 1-6 2-10 2C10 32 4 27 4 19c0-5 3-9 7-11-2 2-2 4-2 5h12c0-4-2-6-6-6C9 7 4 9 0 14z" fill="#0b7bdc" /></svg>
    </TaskApp>
    <TaskApp label="File Explorer">
      <svg width="32" height="32"><path d="M0 2c0-1 1-2 2-2h11l3 3h14c1 0 2 0 2 2v25H0z" fill="#fde08b" /><path d="M0 1h14l2 4H0z" fill="#f5c542" /><path d="M6 32V19c0-2 1-3 3-3h14c2 0 3 1 3 3v13h-6v-8h-8v8z" fill="#3fb4e6" /></svg>
    </TaskApp>
    <TaskApp label="Chrome">
      <svg width="34" height="34"><circle cx="17" cy="17" r="16.500" fill="#fbc93d" /><path d="M2.700 8.800A16.500 16.500 0 0 1 31.300 9H17l-7 12z" fill="#d9453a" /><path d="M2.700 8.800A16.500 16.500 0 0 0 16 33.400L24 21l-13 1z" fill="#1c9a56" /><circle cx="17" cy="17" r="7.800" fill="#fff" /><circle cx="17" cy="17" r="6" fill="#4a87ee" /></svg>
    </TaskApp>
    <TaskApp label="Foxit PDF">
      <svg width="36" height="36"><path d="M0 0h27l9 9v27H0z" fill="#f68a1e" /><path d="M27 0v9h9z" fill="#f68a1e" stroke="#222" /><circle cx="17" cy="16" r="9" fill="#fff" /><path d="M24 6c-8 1-12 6-11 11 2 5 8 5 9 0h-5" fill="none" stroke="#f68a1e" strokeWidth="2.500" /><text x="18" y="33" textAnchor="middle" fontSize="8" fontWeight="800" fill="#fff">PDF</text></svg>
    </TaskApp>
    <TaskApp label="Colour tiles">
      <svg width="32" height="35"><path d="M0 0h17v16L0 17z" fill="#d8302a" /><path d="M18 1h14v14l-14 1z" fill="#4bbf33" /><path d="M1 19l16-1v15L2 35z" fill="#c2bd33" /><path d="M18 18l14-1v14l-14 1z" fill="#4a14a8" /></svg>
    </TaskApp>
    <TaskApp label="VLC">
      <svg width="30" height="34"><path d="M4 24h22l4 9H0z" fill="#f7941d" /><path d="M13 0h4l7 27c-4 3-14 3-18 0z" fill="#f07c12" /><path d="M11.500 6h7l1.500 6H10zM8.700 17h12.600l1.500 6c-4 2-11 2-15.600 0z" fill="#e9eef2" /></svg>
    </TaskApp>
    <div className="ml-auto flex h-[60px] items-center">
      <Btn label="People"><svg width="24" height="26" fill="none" stroke="#fff" strokeWidth="2"><circle cx="16.500" cy="6" r="4.500" /><path d="M11 14c3-5 10-4 12 2" /><circle cx="7.500" cy="14" r="4" /><path d="M1 25c1-8 12-8 13 0" /></svg></Btn>
      <Btn label="Hidden icons" className="ml-[31px]"><svg width="20" height="12" fill="none"><path d="M1 11l9-9 9 9" stroke="#fff" strokeWidth="1.500" /></svg></Btn>
      <Btn label="Network" className="ml-[14px]"><svg width="25" height="20" fill="none" stroke="#fff" strokeWidth="1.300"><path d="M8 2h16v13H5V9M1 2h6v6H1zM4 2v4M8 18.500h12M14 15v3" /></svg></Btn>
      <button type="button" className="ml-[14px] w-[36px] pt-px text-center text-[18px]">FRA</button>
      <button type="button" className="ml-[16px] w-[100px] pt-px text-center text-[17px] leading-[28px]">21:04<br />11/02/2018</button>
      <Btn label="Notifications" className="ml-[23px]"><svg width="26" height="26" fill="none"><path d="M1 2h24v18h-8l-4 4-4-4H1z" stroke="#fff" strokeWidth="1.500" /></svg></Btn>
      <span className="mr-[5px] ml-[30px] h-[60px] w-[2px] bg-[#5d5d5d]" />
    </div>
  </footer>
);

/* ---------- overlays ---------- */

const AppMenu = () => (
  <div className="absolute top-0 left-0 flex h-[59px] w-[59px] bg-[#949494] pt-2 pl-2">
    <button type="button" aria-label="Application menu" className="flex h-[41px] w-[41px] items-start gap-px border border-black bg-gradient-to-b from-[#cfcfcf] to-[#6f6f6f] pt-[2px] pl-[4px]">
      <AcadLogo className="h-[28px] w-[24px]" />
      <span className="mt-[15px]"><Caret /></span>
    </button>
  </div>
);

const Tooltip = () => (
  <div className="absolute top-[136px] left-[8px] z-20 border-5 border-[#ed1c24] pt-[3px] pr-[15px] pb-[4px] pl-[6px]">
    <div role="tooltip" className="w-[470px] border-2 border-[#7d7e82] bg-[#f0f1f7] text-[17px] text-[#5c5c5c]">
      <p className="px-[11px] pt-[12px] leading-[26px] font-bold text-[#4f4f4f]">Find poste</p>
      <p className="px-[11px] pt-[8px] leading-[26px] whitespace-nowrap">Find the poste, the substation and linking between them</p>
      <div className="mt-[10px] ml-[3px] border-t-2 border-[#b6b7bb]" />
      <p className="flex items-center gap-[6px] px-[11px] pt-[9px] leading-[26px] font-bold text-[#4f4f4f]">
        <svg width="24" height="22" aria-hidden="true"><path d="M.5.500h21v19H.5z" fill="#f6f6a0" stroke="#999" /><path d="M0 0h21v2H0z" fill="#1020c0" /><path d="M3 13h21v9H3z" fill="#050505" /><path d="M3 13v9" stroke="#1020c0" strokeWidth="2" /><path d="M6 16h8M6 19h4M14 19h6" stroke="#fff" /></svg>
        POSTE
      </p>
      <p className="px-[11px] pt-[10px] pb-[7px] leading-[26px] font-bold text-[#4f4f4f]">Press F1 for more help</p>
    </div>
  </div>
);

export default function App() {
  return (
    <div className="relative min-h-screen overflow-hidden bg-black font-['Open_Sans','Noto_Sans',sans-serif]">
      <TitleBar />
      <Tabs />
      <Ribbon />
      <Canvas />
      <StatusBar />
      <Taskbar />
      <AppMenu />
      <Tooltip />
    </div>
  );
}
